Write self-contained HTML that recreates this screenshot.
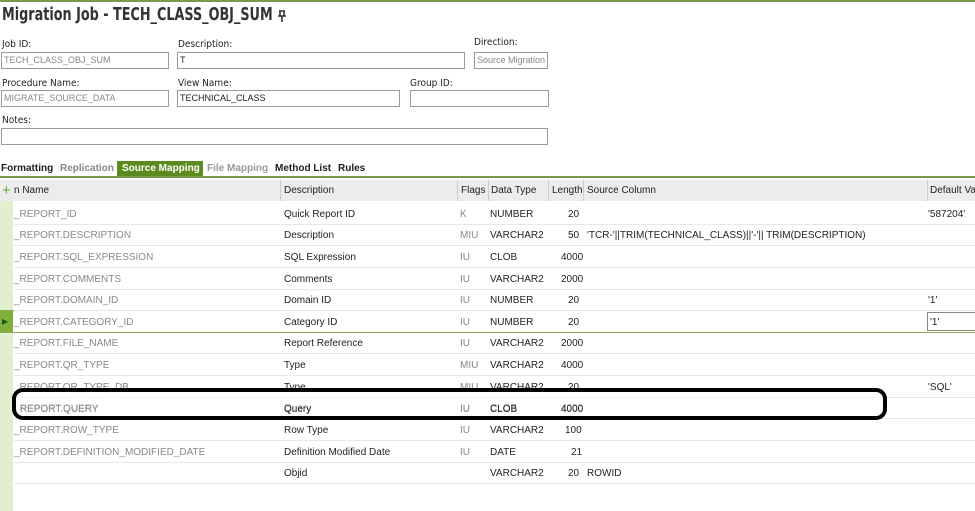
<!DOCTYPE html><html><head><style>
body{margin:0;width:975px;height:511px;background:#fff;position:relative;overflow:hidden;font-family:"Liberation Sans",Arial,sans-serif;}
.a{position:absolute;white-space:nowrap}
.lbl{font-size:10px;color:#222;font-family:"DejaVu Sans Condensed","Liberation Sans",sans-serif;}
.in{position:absolute;border:1px solid #9a9a9a;background:#fff;font-size:9px;line-height:15px;padding-left:2px;color:#888;box-sizing:border-box;height:17px}
.tab{position:absolute;top:161px;height:15px;font-size:10px;font-weight:bold;line-height:15px;}
.row{position:absolute;left:14px;width:961px;height:21px;border-bottom:1px solid #e8e8e8;font-size:10px;color:#222}
.row span{position:absolute;top:6px;white-space:nowrap}
.g{color:#888}
.hd span{position:absolute;top:5px;font-size:10px;color:#222}
</style></head><body>
<div class="a" style="left:0;top:0;width:975px;height:2px;background:#7a9a4a"></div>
<div class="a" style="left:2px;top:4px;font-size:18px;font-weight:bold;color:#333;font-family:'DejaVu Sans Condensed','Liberation Sans',sans-serif;transform:scaleX(.79);transform-origin:left">Migration Job - TECH_CLASS_OBJ_SUM</div>
<svg class="a" style="left:277px;top:10px" width="10" height="12" viewBox="0 0 10 12"><path d="M2 1h6M3 1v5M7 1v5M1 6h8M5 6v6" stroke="#333" stroke-width="1.6" fill="none"/></svg>
<div class="a lbl" style="left:2px;top:39px">Job ID:</div>
<div class="a lbl" style="left:178px;top:39px">Description:</div>
<div class="a lbl" style="left:474px;top:37px">Direction:</div>
<div class="in" style="left:1px;top:52px;width:168px">TECH_CLASS_OBJ_SUM</div>
<div class="in" style="left:177px;top:52px;width:288px;color:#222">T</div>
<div class="in" style="left:474px;top:52px;width:74px;overflow:hidden">Source Migration</div>
<div class="a lbl" style="left:2px;top:78px">Procedure Name:</div>
<div class="a lbl" style="left:178px;top:78px">View Name:</div>
<div class="a lbl" style="left:410px;top:78px">Group ID:</div>
<div class="in" style="left:1px;top:90px;width:168px">MIGRATE_SOURCE_DATA</div>
<div class="in" style="left:177px;top:90px;width:223px;color:#222">TECHNICAL_CLASS</div>
<div class="in" style="left:410px;top:90px;width:139px"></div>
<div class="a lbl" style="left:2px;top:115px">Notes:</div>
<div class="in" style="left:1px;top:128px;width:547px"></div>
<div class="tab" style="left:1px;color:#222">Formatting</div>
<div class="tab" style="left:60px;color:#888">Replication</div>
<div class="tab" style="left:117px;width:86px;background:#5b8a1e;color:#fff;padding-left:5px;box-sizing:border-box">Source Mapping</div>
<div class="tab" style="left:207px;color:#999">File Mapping</div>
<div class="tab" style="left:275px;color:#222">Method List</div>
<div class="tab" style="left:338px;color:#222">Rules</div>
<div class="a" style="left:0;top:176px;width:975px;height:2px;background:#7a9a4a"></div>
<div class="a hd" style="left:0;top:180px;width:975px;height:21px;background:#ececec">
<span style="left:2px;top:2px;color:#6a3;font-size:15px">+</span>
<span style="left:14px">n Name</span>
<span style="left:280px;top:0;height:21px;border-left:1px solid #ccc"></span><span style="left:284px">Description</span>
<span style="left:457px;top:0;height:21px;border-left:1px solid #ccc"></span><span style="left:461px">Flags</span>
<span style="left:488px;top:0;height:21px;border-left:1px solid #ccc"></span><span style="left:491px">Data Type</span>
<span style="left:548px;top:0;height:21px;border-left:1px solid #ccc"></span><span style="left:552px">Length</span>
<span style="left:583px;top:0;height:21px;border-left:1px solid #ccc"></span><span style="left:587px">Source Column</span>
<span style="left:927px;top:0;height:21px;border-left:1px solid #ccc"></span><span style="left:930px">Default Val</span>
</div>
<div class="a" style="left:0;top:201px;width:13px;height:310px;background:#e2efcf"></div>
<div class="a" style="left:0;top:311px;width:13px;height:21px;background:#7fb03a;color:#1a5a1a;font-size:8px;line-height:21px;padding-left:2px;box-sizing:border-box">&#9654;</div>
<div class="a" style="left:0;top:310px;width:975px;height:1px;background:#8aaa5a"></div>
<div class="a" style="left:0;top:332px;width:975px;height:1px;background:#8aaa5a"></div>

<div class="row" style="top:203px"><span class="g">_REPORT_ID</span><span style="left:270px">Quick Report ID</span><span class="g" style="left:446px">K</span><span style="left:476px">NUMBER</span><span style="left:554px">20</span><span style="left:914px">'587204'</span></div>
<div class="row" style="top:224px"><span class="g">_REPORT.DESCRIPTION</span><span style="left:270px">Description</span><span class="g" style="left:446px">MIU</span><span style="left:476px">VARCHAR2</span><span style="left:554px">50</span><span style="left:573px">'TCR-'||TRIM(TECHNICAL_CLASS)||'-'|| TRIM(DESCRIPTION)</span></div>
<div class="row" style="top:246px"><span class="g">_REPORT.SQL_EXPRESSION</span><span style="left:270px">SQL Expression</span><span class="g" style="left:446px">IU</span><span style="left:476px">CLOB</span><span style="left:547px">4000</span></div>
<div class="row" style="top:268px"><span class="g">_REPORT.COMMENTS</span><span style="left:270px">Comments</span><span class="g" style="left:446px">IU</span><span style="left:476px">VARCHAR2</span><span style="left:547px">2000</span></div>
<div class="row" style="top:289px"><span class="g">_REPORT.DOMAIN_ID</span><span style="left:270px">Domain ID</span><span class="g" style="left:446px">IU</span><span style="left:476px">NUMBER</span><span style="left:554px">20</span><span style="left:914px">'1'</span></div>
<div class="row" style="top:311px;border:0"><span class="g">_REPORT.CATEGORY_ID</span><span style="left:270px">Category ID</span><span class="g" style="left:446px">IU</span><span style="left:476px">NUMBER</span><span style="left:554px">20</span><span style="left:913px;top:1px;width:50px;height:19px;border:1px solid #888;padding:4px 2px 0;box-sizing:border-box">'1'</span></div>
<div class="row" style="top:332px"><span class="g">_REPORT.FILE_NAME</span><span style="left:270px">Report Reference</span><span class="g" style="left:446px">IU</span><span style="left:476px">VARCHAR2</span><span style="left:547px">2000</span></div>
<div class="row" style="top:354px"><span class="g">_REPORT.QR_TYPE</span><span style="left:270px">Type</span><span class="g" style="left:446px">MIU</span><span style="left:476px">VARCHAR2</span><span style="left:547px">4000</span></div>
<div class="row" style="top:376px"><span class="g">_REPORT.QR_TYPE_DB</span><span style="left:270px">Type</span><span class="g" style="left:446px">MIU</span><span style="left:476px">VARCHAR2</span><span style="left:554px">20</span><span style="left:914px">'SQL'</span></div>
<div class="row" style="top:397px"><span class="g">_REPORT.QUERY</span><span style="left:270px">Query</span><span class="g" style="left:446px">IU</span><span style="left:476px">CLOB</span><span style="left:547px">4000</span></div>
<div class="row" style="top:419px"><span class="g">_REPORT.ROW_TYPE</span><span style="left:270px">Row Type</span><span class="g" style="left:446px">IU</span><span style="left:476px">VARCHAR2</span><span style="left:551px">100</span></div>
<div class="row" style="top:441px"><span class="g">_REPORT.DEFINITION_MODIFIED_DATE</span><span style="left:270px">Definition Modified Date</span><span class="g" style="left:446px">IU</span><span style="left:476px">DATE</span><span style="left:557px">21</span></div>
<div class="row" style="top:462px"><span style="left:270px">Objid</span><span style="left:476px">VARCHAR2</span><span style="left:554px">20</span><span style="left:573px">ROWID</span></div>
<div class="a" style="left:12px;top:388px;width:875px;height:32px;border:4px solid #000;border-radius:11px;box-sizing:border-box;background:rgba(255,255,255,.55)"></div>
<div class="a" style="left:20px;top:404px;font-size:10px;color:#888">REPORT.QUERY</div>
<div class="a" style="left:284px;top:404px;font-size:10px;color:#222">Query</div>
<div class="a" style="left:460px;top:404px;font-size:10px;color:#888">IU</div>
<div class="a" style="left:490px;top:404px;font-size:10px;color:#222">CLOB</div>
<div class="a" style="left:561px;top:404px;font-size:10px;color:#222">4000</div>
</body></html>
